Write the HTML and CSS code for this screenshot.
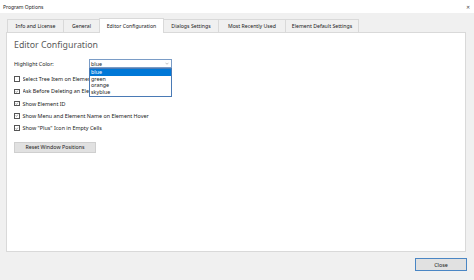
FILE: index.html
```html
<!DOCTYPE html>
<html lang="en">
<head>
  <meta charset="UTF-8" />
  <title>Program Options</title>
  <link rel="stylesheet" href="styles.css">
</head>
<body>
  <div class="window">
    <div class="titlebar">
      <span class="title">Program Options</span>
      <span class="close-x">&#x2715;</span>
    </div>

    <div class="window-body">
      <div class="tabs">
        <div class="tab tab-info">Info and License</div>
        <div class="tab tab-general">General</div>
        <div class="tab tab-editor active">Editor Configuration</div>
        <div class="tab tab-dialogs">Dialogs Settings</div>
        <div class="tab tab-recent">Most Recently Used</div>
        <div class="tab tab-defaults">Element Default Settings</div>
      </div>

      <div class="panel">
        <h1>Editor Configuration</h1>

        <div class="field-row">
          <label class="field-label">Highlight Color:</label>
          <div class="select-wrap">
            <div class="select">
              <span>blue</span>
              <svg class="chevron" viewBox="0 0 8 5"><path d="M1 1L4 4L7 1" fill="none" stroke="#666" stroke-width="0.8"/></svg>
            </div>
            <div class="dropdown-list">
              <div class="option selected">blue</div>
              <div class="option">green</div>
              <div class="option">orange</div>
              <div class="option">skyblue</div>
            </div>
          </div>
        </div>

        <div class="checks">
          <div class="check-row">
            <span class="box"></span>
            <span class="check-label clipped">Select Tree Item on Element Selection</span>
          </div>
          <div class="check-row">
            <span class="box checked"><svg viewBox="0 0 6 6"><path d="M1 3L2.5 4.5L5 1.5" fill="none" stroke="#333" stroke-width="0.8"/></svg></span>
            <span class="check-label clipped">Ask Before Deleting an Element</span>
          </div>
          <div class="check-row">
            <span class="box checked"><svg viewBox="0 0 6 6"><path d="M1 3L2.5 4.5L5 1.5" fill="none" stroke="#333" stroke-width="0.8"/></svg></span>
            <span class="check-label">Show Element ID</span>
          </div>
          <div class="check-row">
            <span class="box checked"><svg viewBox="0 0 6 6"><path d="M1 3L2.5 4.5L5 1.5" fill="none" stroke="#333" stroke-width="0.8"/></svg></span>
            <span class="check-label">Show Menu and Element Name on Element Hover</span>
          </div>
          <div class="check-row">
            <span class="box checked"><svg viewBox="0 0 6 6"><path d="M1 3L2.5 4.5L5 1.5" fill="none" stroke="#333" stroke-width="0.8"/></svg></span>
            <span class="check-label">Show "Plus" Icon in Empty Cells</span>
          </div>
        </div>

        <button class="btn-reset">Reset Window Positions</button>
      </div>

      <div class="footer">
        <button class="btn-close">Close</button>
      </div>
    </div>
  </div>
</body>
</html>
```

FILE: styles.css
```css
:root {
  --window-bg: #f0f0f0;
  --panel-bg: #ffffff;
  --border: #d9d9d9;
  --text: #1a1a1a;
  --heading: #5a5a5a;
  --accent: #0078d7;
  --button-bg: #e1e1e1;
}

* {
  box-sizing: border-box;
  margin: 0;
  padding: 0;
}

body {
  width: 474px;
  height: 280px;
  overflow: hidden;
  font-family: "Noto Sans", "Open Sans", sans-serif;
  font-size: 5.4px;
  color: var(--text);
  background-color: #ffffff;
}

.window {
  display: flex;
  flex-direction: column;
  height: 280px;
}

.titlebar {
  height: 13px;
  display: flex;
  align-items: center;
  justify-content: space-between;
  padding: 0 4px 0 3px;
  background-color: #ffffff;
}

.title {
  font-size: 5px;
}

.close-x {
  font-size: 5px;
  color: #444;
}

.window-body {
  flex: 1;
  display: flex;
  flex-direction: column;
  background-color: var(--window-bg);
  padding: 5px 8px 0 6px;
}

/* tab strip */
.tabs {
  display: flex;
  align-items: flex-end;
  height: 14px;
  padding-left: 1px;
}

.tab {
  height: 13px;
  display: flex;
  align-items: center;
  justify-content: center;
  font-size: 5.2px;
  border: 1px solid var(--border);
  border-bottom: none;
  margin-right: -1px;
  background-color: var(--window-bg);
}

.tab-info { width: 57px; }
.tab-general { width: 37px; }
.tab-editor { width: 65px; }
.tab-dialogs { width: 56px; }
.tab-recent { width: 68px; }
.tab-defaults { width: 74px; }

.tab.active {
  height: 15px;
  background-color: var(--panel-bg);
  position: relative;
  z-index: 1;
  margin-bottom: -1px;
}

/* content panel */
.panel {
  height: 220px;
  background-color: var(--panel-bg);
  border: 1px solid var(--border);
  padding: 6px 7px;
}

h1 {
  font-size: 8.8px;
  font-weight: 400;
  color: var(--heading);
  line-height: 12px;
  margin-bottom: 8px;
}

.field-row {
  display: flex;
  align-items: center;
  height: 9px;
}

.field-label {
  width: 75px;
}

.select-wrap {
  position: relative;
}

.select {
  width: 83px;
  height: 9px;
  border: 1px solid #7a9cc6;
  display: flex;
  align-items: center;
  justify-content: space-between;
  padding: 0 2px 0 1px;
  background-color: #fff;
}

.chevron {
  width: 4px;
  height: 3px;
}

.dropdown-list {
  position: absolute;
  top: 9px;
  left: 0;
  width: 83px;
  border: 1px solid #4a7ab5;
  background-color: #fff;
  z-index: 2;
  padding-bottom: 1px;
}

.option {
  height: 6.6px;
  line-height: 6.6px;
  padding-left: 1px;
}

.option.selected {
  background-color: var(--accent);
  color: #fff;
}

/* checkbox list */
.checks {
  display: flex;
  flex-direction: column;
  gap: 5.3px;
  margin-top: 7.5px;
}

.check-row {
  display: flex;
  align-items: center;
  gap: 3px;
  height: 7px;
}

.check-label {
  white-space: nowrap;
}

/* labels that run under the open dropdown */
.check-label.clipped {
  max-width: 66px;
  overflow: hidden;
}

.box {
  width: 5.5px;
  height: 5.5px;
  border: 0.8px solid #555;
  background-color: #fff;
  display: flex;
  align-items: center;
  justify-content: center;
}

.box svg {
  width: 5px;
  height: 5px;
}

.btn-reset {
  margin-top: 10px;
  width: 82px;
  height: 11px;
  font-family: inherit;
  font-size: 5.3px;
  color: var(--text);
  background-color: var(--button-bg);
  border: 1px solid #cfcfcf;
}

/* bottom bar */
.footer {
  display: flex;
  justify-content: flex-end;
  padding-top: 6px;
  margin-right: -1px;
}

.btn-close {
  width: 52px;
  height: 13px;
  font-family: inherit;
  font-size: 5.4px;
  color: var(--text);
  background-color: var(--button-bg);
  border: 1px solid #4a86c4;
}
```
